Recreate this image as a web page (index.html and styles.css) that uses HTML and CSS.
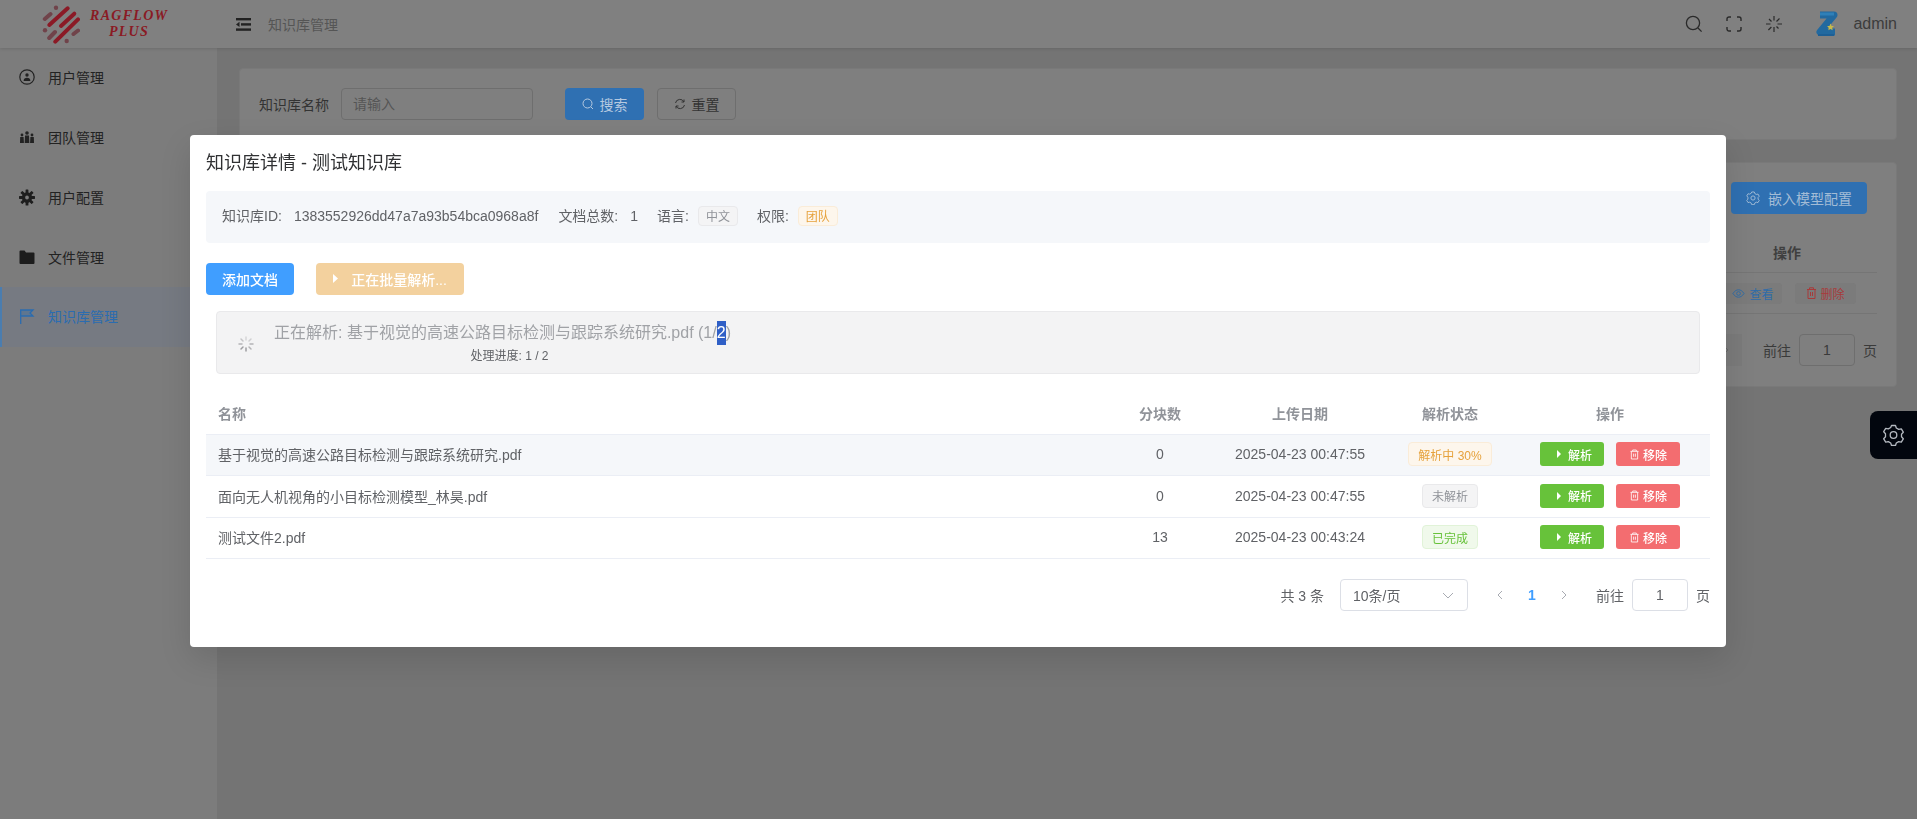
FILE: index.html
```html
<!DOCTYPE html>
<html lang="zh-CN">
<head>
    <meta charset="UTF-8">
    <title>知识库管理</title>
    <link rel="stylesheet" href="styles.css">
</head>
<body>
    <div class="app">
        <header class="topbar">
            <div class="brand">
                <svg class="brand-mark" width="38" height="39" viewBox="0 0 38 39" fill="none" stroke-linecap="round">
                    <g stroke="#8b1a26" stroke-width="4">
                        <path d="M7.300 20L25.700 3.300"/>
                        <path d="M19 21L32.300 8.700"/>
                        <path d="M13.300 36.700L36 14.300"/>
                    </g>
                    <path d="M2.800 14L8.500 9M7.200 33L13 27M31.500 29L36 25.500" stroke="#70434a" stroke-width="4"/>
                    <circle cx="14" cy="2.700" r="2.200" fill="#70434a"/>
                    <circle cx="3" cy="25.300" r="2.200" fill="#70434a"/>
                    <circle cx="24.700" cy="36" r="2.200" fill="#70434a"/>
                </svg>
                <div class="brand-name">RAGFLOW<br>PLUS</div>
            </div>
            <div class="topbar-left">
                <svg class="hamburger" width="15" height="13" viewBox="0 0 15 13" fill="#222">
                    <rect width="15" height="2.400"/>
                    <rect x="5" y="5.200" width="10" height="2.400"/>
                    <rect y="10.400" width="15" height="2.400"/>
                    <path d="M0 6.400L3.500 3.800V9z"/>
                </svg>
                <span class="crumb">知识库管理</span>
            </div>
            <div class="topbar-right">
                <svg class="top-icon" width="18" height="18" viewBox="0 0 18 18" fill="none" stroke="#2a2a2a" stroke-width="1.300">
                    <circle cx="8" cy="8" r="6.600"/>
                    <path d="M13 13l3.600 3.600"/>
                </svg>
                <svg class="top-icon" width="16" height="16" viewBox="0 0 16 16" fill="none" stroke="#2a2a2a" stroke-width="1.400">
                    <path d="M1 5V3a2 2 0 0 1 2-2h2M11 1h2a2 2 0 0 1 2 2v2M15 11v2a2 2 0 0 1-2 2h-2M5 15H3a2 2 0 0 1-2-2v-2"/>
                </svg>
                <svg class="top-icon" width="18" height="18" viewBox="0 0 18 18" fill="none" stroke="#2a2a2a" stroke-width="1.200">
                    <path d="M9 1v4.500M9 12v5M1 9h4.500M12.500 9H17M3.400 15l3-3M11.500 6.500l3-3M4 4l2.500 2.500M11.500 11.500l2 2"/>
                </svg>
                <svg class="avatar" width="24" height="28" viewBox="0 0 24 28" fill="none" stroke-linejoin="round">
                    <path d="M5 5H19L5 22H20" stroke="#22699f" stroke-width="7"/>
                    <path d="M5 4H19" stroke="#2f80b8" stroke-width="3"/>
                    <path d="M3 25H19" stroke="#1d5f95" stroke-width="2"/>
                    <path d="M15.500 13.500l1 2.400 2.500.2-1.900 1.600.6 2.500-2.200-1.300-2.200 1.300.6-2.500-1.900-1.600 2.500-.2z" fill="#c7bb4a"/>
                </svg>
                <span class="username">admin</span>
            </div>
        </header>

        <div class="layout">
            <aside class="sidebar">
                <a class="menu-item">
                    <svg width="16" height="16" viewBox="0 0 16 16" fill="none" stroke="#222" stroke-width="1.200">
                        <circle cx="8" cy="8" r="7.200"/>
                        <circle cx="8" cy="6" r="1.700" fill="#222" stroke="none"/>
                        <path d="M4.600 12h6.800c0-2.200-1.500-3.200-3.400-3.200s-3.400 1-3.400 3.200z" fill="#222" stroke="none"/>
                    </svg>
                    用户管理
                </a>
                <a class="menu-item">
                    <svg width="16" height="16" viewBox="0 0 16 16" fill="#222">
                        <circle cx="8" cy="4" r="1.800"/>
                        <circle cx="3" cy="6" r="1.400"/>
                        <circle cx="13" cy="6" r="1.400"/>
                        <path d="M6 6.500h4l.3 7.500H5.700z"/>
                        <path d="M1.200 8h3.400l.3 6H1z"/>
                        <path d="M11.400 8h3.400l.2 6h-3.900z"/>
                    </svg>
                    团队管理
                </a>
                <a class="menu-item">
                    <svg width="17" height="17" viewBox="0 0 17 17" fill="#1e1e1e">
                        <path fill-rule="evenodd" d="M8.500 3a5.500 5.500 0 1 0 0 11 5.500 5.500 0 0 0 0-11zm0 3.500a2 2 0 1 1 0 4 2 2 0 0 1 0-4z"/>
                        <g>
                            <rect x="7" y="0" width="3" height="4" rx=".6"/>
                            <rect x="7" y="13" width="3" height="4" rx=".6"/>
                            <rect x="0" y="7" width="4" height="3" rx=".6"/>
                            <rect x="13" y="7" width="4" height="3" rx=".6"/>
                        </g>
                        <g transform="rotate(45 8.500 8.500)">
                            <rect x="7" y="0" width="3" height="4" rx=".6"/>
                            <rect x="7" y="13" width="3" height="4" rx=".6"/>
                            <rect x="0" y="7" width="4" height="3" rx=".6"/>
                            <rect x="13" y="7" width="4" height="3" rx=".6"/>
                        </g>
                    </svg>
                    用户配置
                </a>
                <a class="menu-item">
                    <svg width="15" height="14" viewBox="0 0 15 14" fill="#1c1c1c">
                        <path d="M0 1.500A1 1 0 0 1 1 .5h4l1.500 2H14a1 1 0 0 1 1 1V13a1 1 0 0 1-1 1H1a1 1 0 0 1-1-1z"/>
                    </svg>
                    文件管理
                </a>
                <a class="menu-item menu-item-active">
                    <svg width="14" height="15" viewBox="0 0 14 15" fill="none" stroke="#2b6cb0" stroke-width="1.300">
                        <path d="M.7 15V1h12.300L10 4l3 3H.7"/>
                        <path d="M.7 1h12L10 4l3 3H.7z" fill="#2b6cb0" fill-opacity=".3" stroke="none"/>
                    </svg>
                    知识库管理
                </a>
            </aside>

            <main class="main">
                <section class="card search-card">
                    <label class="search-label">知识库名称</label>
                    <div class="search-input">请输入</div>
                    <div class="btn btn-search">
                        <svg width="12" height="12" viewBox="0 0 12 12" fill="none" stroke="#b5c9e0" stroke-width="1">
                            <circle cx="5.500" cy="5.500" r="4.500"/>
                            <path d="M9 9l2 2"/>
                        </svg>
                        搜索
                    </div>
                    <div class="btn btn-reset">
                        <svg width="12" height="12" viewBox="0 0 12 12" fill="none" stroke="#333" stroke-width="1">
                            <path d="M1.500 5A4.500 4.500 0 0 1 10 4M10.500 7A4.500 4.500 0 0 1 2 8M10 1.500V4H7.500M2 10.500V8h2.500"/>
                        </svg>
                        重置
                    </div>
                </section>

                <section class="card list-card">
                    <div class="list-toolbar">
                        <div class="btn btn-embed">
                            <svg width="14" height="14" viewBox="0 0 21 22" fill="none" stroke="#a3bcd6" stroke-width="1.500" stroke-linejoin="round">
                                <path d="M8.500 1.500h4l.8 2.500 2.400 1.400 2.600-.6 2 3.400-1.800 2v2.600l1.800 2-2 3.400-2.600-.6-2.400 1.400-.8 2.500h-4l-.8-2.500-2.400-1.400-2.600.6-2-3.400 1.800-2V9.700l-1.800-2 2-3.400 2.600.6 2.400-1.400z"/>
                                <circle cx="10.500" cy="11" r="3.300"/>
                            </svg>
                            嵌入模型配置
                        </div>
                    </div>
                    <div class="list-head"><span class="list-op">操作</span></div>
                    <div class="list-row">
                        <div class="list-op">
                            <span class="mini-btn mini-view">
                                <svg width="13" height="13" viewBox="0 0 14 14" fill="none" stroke="#2f6ca8" stroke-width="1">
                                    <path d="M1 7c2-3 4-4 6-4s4 1 6 4c-2 3-4 4-6 4s-4-1-6-4z"/>
                                    <circle cx="7" cy="7" r="2"/>
                                </svg>
                                查看
                            </span>
                            <span class="mini-btn mini-delete">
                                <svg width="11" height="12" viewBox="0 0 11 12" fill="none" stroke="#a83a3a" stroke-width="1">
                                    <path d="M1 2.500h9M3.500 2.500V.8h4v1.700M2 2.500v9h7v-9M4.500 5v4M6.500 5v4"/>
                                </svg>
                                删除
                            </span>
                        </div>
                    </div>
                    <div class="list-pager">
                        <span class="pager-next">
                            <svg width="7" height="10" viewBox="0 0 7 10" fill="none" stroke="#666" stroke-width="1">
                                <path d="M1 1l4 4-4 4"/>
                            </svg>
                        </span>
                        <span>前往</span>
                        <span class="pager-jump">1</span>
                        <span>页</span>
                    </div>
                </section>
            </main>
        </div>
    </div>

    <button class="settings-tab" type="button" aria-label="设置">
        <svg width="21" height="22" viewBox="0 0 21 22" fill="none" stroke="#b4b9c0" stroke-width="1.300" stroke-linejoin="round">
            <path d="M8.500 1.500h4l.8 2.500 2.400 1.400 2.600-.6 2 3.400-1.800 2v2.600l1.800 2-2 3.400-2.600-.6-2.400 1.400-.8 2.500h-4l-.8-2.500-2.400-1.400-2.600.6-2-3.400 1.800-2V9.700l-1.800-2 2-3.400 2.600.6 2.400-1.400z"/>
            <circle cx="10.500" cy="11" r="3.300"/>
        </svg>
    </button>

    <div class="dialog-wrap">
        <div class="dialog">
            <h2 class="dialog-title">知识库详情 - 测试知识库</h2>

            <div class="info-box">
                <div class="info-item"><span>知识库ID:</span><span>1383552926dd47a7a93b54bca0968a8f</span></div>
                <div class="info-item"><span>文档总数:</span><span>1</span></div>
                <div class="info-item info-item-tag"><span>语言:</span><span class="tag tag-grey tag-small">中文</span></div>
                <div class="info-item info-item-tag"><span>权限:</span><span class="tag tag-orange tag-small">团队</span></div>
            </div>

            <div class="dialog-actions">
                <div class="btn btn-add">添加文档</div>
                <div class="btn btn-batch">
                    <svg width="5" height="9" viewBox="0 0 5 9" fill="#fff"><path d="M0 0l5 4.500L0 9z"/></svg>
                    正在批量解析...
                </div>
            </div>

            <div class="progress-box">
                <svg class="spinner" width="16" height="16" viewBox="0 0 16 16" fill="none" stroke="#b4b4b6" stroke-width="1.500" stroke-linecap="round">
                    <path d="M8 1v3" stroke="#d6d6d8"/>
                    <path d="M13 3l-2 2" stroke="#cfcfd1"/>
                    <path d="M15 8h-3"/>
                    <path d="M13 13l-2-2"/>
                    <path d="M8 15v-3" stroke="#9d9da0"/>
                    <path d="M3 13l2-2" stroke="#9d9da0"/>
                    <path d="M1 8h3"/>
                    <path d="M3 3l2 2" stroke="#c4c4c6"/>
                </svg>
                <div class="progress-text">
                    <div class="progress-title">正在解析: 基于视觉的高速公路目标检测与跟踪系统研究.pdf (1/<span class="selected">2</span>)</div>
                    <div class="progress-sub">处理进度: 1 / 2</div>
                </div>
            </div>

            <table class="doc-table">
                <colgroup>
                    <col>
                    <col class="col-chunks">
                    <col class="col-date">
                    <col class="col-status">
                    <col class="col-ops">
                </colgroup>
                <thead>
                    <tr>
                        <th class="cell-name">名称</th>
                        <th>分块数</th>
                        <th>上传日期</th>
                        <th>解析状态</th>
                        <th>操作</th>
                    </tr>
                </thead>
                <tbody>
                    <tr class="row-hover">
                        <td class="cell-name">基于视觉的高速公路目标检测与跟踪系统研究.pdf</td>
                        <td>0</td>
                        <td>2025-04-23 00:47:55</td>
                        <td><span class="tag tag-orange">解析中 30%</span></td>
                        <td>
                            <div class="row-ops">
                                <span class="row-btn row-parse">
                                    <svg width="4" height="8" viewBox="0 0 4 8" fill="#fff"><path d="M0 0l4 4-4 4z"/></svg>
                                    解析
                                </span>
                                <span class="row-btn row-remove">
                                    <svg width="9" height="11" viewBox="0 0 10 11" fill="none" stroke="#fff" stroke-width=".9"><path d="M.5 2h9M3 2V.5h4V2M1.500 2v8.500h7V2M4 4.500v3.500M6 4.500v3.500"/></svg>
                                    移除
                                </span>
                            </div>
                        </td>
                    </tr>
                    <tr>
                        <td class="cell-name">面向无人机视角的小目标检测模型_林昊.pdf</td>
                        <td>0</td>
                        <td>2025-04-23 00:47:55</td>
                        <td><span class="tag tag-grey">未解析</span></td>
                        <td>
                            <div class="row-ops">
                                <span class="row-btn row-parse">
                                    <svg width="4" height="8" viewBox="0 0 4 8" fill="#fff"><path d="M0 0l4 4-4 4z"/></svg>
                                    解析
                                </span>
                                <span class="row-btn row-remove">
                                    <svg width="9" height="11" viewBox="0 0 10 11" fill="none" stroke="#fff" stroke-width=".9"><path d="M.5 2h9M3 2V.5h4V2M1.500 2v8.500h7V2M4 4.500v3.500M6 4.500v3.500"/></svg>
                                    移除
                                </span>
                            </div>
                        </td>
                    </tr>
                    <tr>
                        <td class="cell-name">测试文件2.pdf</td>
                        <td>13</td>
                        <td>2025-04-23 00:43:24</td>
                        <td><span class="tag tag-green">已完成</span></td>
                        <td>
                            <div class="row-ops">
                                <span class="row-btn row-parse">
                                    <svg width="4" height="8" viewBox="0 0 4 8" fill="#fff"><path d="M0 0l4 4-4 4z"/></svg>
                                    解析
                                </span>
                                <span class="row-btn row-remove">
                                    <svg width="9" height="11" viewBox="0 0 10 11" fill="none" stroke="#fff" stroke-width=".9"><path d="M.5 2h9M3 2V.5h4V2M1.500 2v8.500h7V2M4 4.500v3.500M6 4.500v3.500"/></svg>
                                    移除
                                </span>
                            </div>
                        </td>
                    </tr>
                </tbody>
            </table>

            <div class="pagination">
                <span class="page-total">共 3 条</span>
                <div class="page-size">
                    <span>10条/页</span>
                    <svg width="12" height="7" viewBox="0 0 12 7" fill="none" stroke="#a8abb2" stroke-width="1"><path d="M1 1l5 5 5-5"/></svg>
                </div>
                <div class="page-nums">
                    <svg width="7" height="10" viewBox="0 0 7 10" fill="none" stroke="#a8abb2" stroke-width="1"><path d="M6 1L2 5l4 4"/></svg>
                    <span class="page-current">1</span>
                    <svg width="7" height="10" viewBox="0 0 7 10" fill="none" stroke="#a8abb2" stroke-width="1"><path d="M1 1l4 4-4 4"/></svg>
                </div>
                <span class="page-goto">前往</span>
                <span class="page-input">1</span>
                <span>页</span>
            </div>
        </div>
    </div>
</body>
</html>
```

FILE: styles.css
```css
* {
    margin: 0;
    padding: 0;
    box-sizing: border-box;
}

body {
    width: 100vw;
    height: 100vh;
    overflow: hidden;
    background: #747474;
    color: #333;
    font-family: "Liberation Sans", "Noto Sans CJK SC", sans-serif;
    font-size: 14px;
}

.app {
    height: 100vh;
    display: flex;
    flex-direction: column;
}

/* top bar */
.topbar {
    height: 48px;
    flex-shrink: 0;
    display: flex;
    align-items: center;
    background: #808080;
    box-shadow: 0 1px 3px rgba(0, 0, 0, .12);
    position: relative;
}

.brand {
    width: 236px;
    padding-left: 42px;
    display: flex;
    align-items: center;
    gap: 10px;
}

.brand-name {
    width: 78px;
    font-family: "Liberation Serif", serif;
    font-size: 14px;
    font-weight: bold;
    font-style: italic;
    line-height: 16px;
    letter-spacing: 1.300px;
    text-align: center;
    color: #8a1a24;
    padding-bottom: 1px;
}

.topbar-left {
    display: flex;
    align-items: center;
    gap: 17px;
    flex: 1;
}

.crumb {
    color: #555;
}

.topbar-right {
    display: flex;
    align-items: center;
    padding-right: 20px;
}

.top-icon {
    margin-right: 23px;
}

.avatar {
    margin-left: 9px;
    margin-right: 14px;
}

.username {
    font-size: 16px;
    color: #3c3c3c;
}

/* left menu */
.layout {
    flex: 1;
    display: flex;
}

.sidebar {
    width: 217px;
    flex-shrink: 0;
    background: #7c7c7c;
}

.menu-item {
    height: 60px;
    padding-left: 19px;
    padding-bottom: 2px;
    display: flex;
    align-items: center;
    gap: 13px;
    color: #222;
}

.menu-item svg {
    width: 16px;
    flex-shrink: 0;
}

.menu-item-active {
    margin-top: -1px;
    background: #767a82;
    border-left: 2px solid #4a7db0;
    padding-left: 17px;
    color: #2b6cb0;
}

/* page behind the dialog */
.main {
    flex: 1;
    padding: 20px 20px 20px 22px;
    display: flex;
    flex-direction: column;
    gap: 22px;
}

.card {
    background: #7f7f7f;
    border: 1px solid #797979;
    border-radius: 4px;
}

.search-card {
    height: 72px;
    padding: 0 19px;
    display: flex;
    align-items: center;
    color: #333;
}

.search-label {
    width: 82px;
}

.search-input {
    width: 192px;
    height: 32px;
    line-height: 30px;
    padding-left: 11px;
    border: 1px solid #6e6e6e;
    border-radius: 4px;
    color: #555;
    margin-right: 32px;
}

.btn {
    height: 32px;
    padding-bottom: 1px;
    border-radius: 4px;
    display: inline-flex;
    align-items: center;
    justify-content: center;
    gap: 6px;
}

.btn-search {
    width: 79px;
    background: #2f70b2;
    color: #b5c9e0;
    margin-right: 13px;
}

.btn-reset {
    width: 79px;
    border: 1px solid #6e6e6e;
    color: #333;
}

.list-card {
    height: 225px;
    padding: 19px 19px;
}

.list-toolbar {
    display: flex;
    justify-content: flex-end;
    padding-right: 10px;
}

.btn-embed {
    width: 136px;
    background: #2f70b2;
    color: #a3bcd6;
    gap: 8px;
}

.list-head,
.list-row {
    display: flex;
    justify-content: flex-end;
    align-items: center;
    border-bottom: 1px solid #757575;
}

.list-head {
    height: 59px;
    padding-top: 18px;
    font-weight: bold;
    color: #3f3f3f;
}

.list-row {
    height: 41px;
}

.list-op {
    width: 180px;
    padding-left: 6px;
    display: flex;
    justify-content: center;
    gap: 13px;
}

.list-head .list-op {
    padding-left: 0;
}

.mini-btn {
    height: 21px;
    padding: 0 8px;
    display: inline-flex;
    align-items: center;
    gap: 4px;
    font-size: 12px;
    background: #7b7b7b;
    border-radius: 3px;
}

.mini-view {
    color: #2f6ca8;
}

.mini-delete {
    padding: 0 11px;
    color: #a83a3a;
}

.list-pager {
    margin-top: 20px;
    display: flex;
    justify-content: flex-end;
    align-items: center;
    height: 32px;
    color: #3a3a3a;
}

.pager-next {
    width: 32px;
    height: 32px;
    margin-right: 21px;
    display: flex;
    align-items: center;
    justify-content: center;
    background: #7b7b7b;
}

.pager-jump {
    width: 56px;
    height: 32px;
    margin: 0 8px;
    line-height: 30px;
    text-align: center;
    border: 1px solid #6e6e6e;
    border-radius: 4px;
}

.settings-tab {
    position: fixed;
    top: 411px;
    right: 0;
    width: 47px;
    height: 48px;
    border: none;
    border-radius: 8px 0 0 8px;
    background: #02060e;
    display: flex;
    align-items: center;
    justify-content: center;
}

/* dialog */
.dialog-wrap {
    position: fixed;
    inset: 0;
    padding: 135px 1px 0 0;
    display: flex;
    justify-content: center;
    align-items: flex-start;
}

.dialog {
    width: 1536px;
    height: 512px;
    padding: 16px;
    background: #fff;
    border-radius: 4px;
    box-shadow: 0 12px 32px rgba(0, 0, 0, .12);
}

.dialog-title {
    font-size: 18px;
    font-weight: normal;
    line-height: 24px;
    color: #303133;
}

.info-box {
    margin-top: 16px;
    height: 52px;
    padding: 14px 16px 0;
    display: flex;
    align-items: baseline;
    gap: 20px;
    background: #f5f7fa;
    border-radius: 4px;
    color: #606266;
}

.info-item {
    display: flex;
    align-items: baseline;
    gap: 12px;
}

.info-item-tag {
    margin-left: -1px;
    gap: 9px;
}

.tag {
    display: inline-flex;
    align-items: center;
    justify-content: center;
    height: 24px;
    padding: 0 9px;
    font-size: 12px;
    border: 1px solid;
    border-radius: 4px;
}

.tag-small {
    width: 40px;
    height: 20px;
    padding: 0;
}

.tag-grey {
    background: #f4f4f5;
    border-color: #e9e9eb;
    color: #909399;
}

.tag-orange {
    background: #fdf6ec;
    border-color: #faecd8;
    color: #e6a23c;
}

.tag-green {
    background: #f0f9eb;
    border-color: #e1f3d8;
    color: #67c23a;
}

.dialog-actions {
    margin-top: 20px;
    display: flex;
    gap: 22px;
}

.btn-add {
    width: 88px;
    background: #409eff;
    color: #fff;
    font-weight: 500;
}

.btn-batch {
    width: 148px;
    background: #f3d19e;
    color: #fff;
    gap: 13px;
    font-weight: 500;
}

.progress-box {
    margin: 16px 10px 0;
    height: 63px;
    padding-left: 21px;
    display: flex;
    align-items: center;
    gap: 20px;
    background: #f3f3f4;
    border: 1px solid #e9e9eb;
    border-radius: 4px;
}

.spinner {
    margin-top: 2px;
}

.progress-title {
    font-size: 16px;
    line-height: 24px;
    color: #a0a2a6;
}

.selected {
    display: inline-block;
    width: 9px;
    line-height: 24px;
    background: #2f5fc6;
    color: #fff;
}

.progress-sub {
    margin-top: 2px;
    font-size: 12px;
    line-height: 18px;
    text-align: center;
    color: #606266;
    padding-left: 14px;
}

.doc-table {
    width: 100%;
    margin-top: 20px;
    table-layout: fixed;
    border-collapse: collapse;
    color: #606266;
}

.col-chunks {
    width: 100px;
}

.col-date {
    width: 180px;
}

.col-status {
    width: 120px;
}

.col-ops {
    width: 200px;
}

.doc-table th,
.doc-table td {
    padding-bottom: 1px;
    text-align: center;
    border-bottom: 1px solid #ebeef5;
}

.doc-table th {
    height: 40px;
    font-weight: bold;
    color: #909399;
}

.doc-table td {
    height: 41.500px;
}

.doc-table .cell-name {
    text-align: left;
    padding-left: 12px;
}

.row-hover td {
    background: #f5f7fa;
}

.row-ops {
    display: flex;
    justify-content: center;
    gap: 12px;
}

.row-btn {
    width: 64px;
    height: 24px;
    display: inline-flex;
    align-items: center;
    font-size: 12px;
    font-weight: 500;
    color: #fff;
    border-radius: 3px;
}

.row-parse {
    padding-left: 17px;
    gap: 7px;
    background: #67c23a;
}

.row-remove {
    padding-left: 14px;
    gap: 4px;
    background: #f36d70;
}

.pagination {
    margin-top: 20px;
    height: 32px;
    display: flex;
    justify-content: flex-end;
    align-items: center;
    color: #606266;
}

.page-total {
    margin-right: 16px;
}

.page-size {
    width: 128px;
    height: 32px;
    padding: 0 13px 0 12px;
    display: flex;
    align-items: center;
    justify-content: space-between;
    border: 1px solid #dcdfe6;
    border-radius: 4px;
    margin-right: 16px;
}

.page-nums {
    width: 96px;
    display: flex;
    align-items: center;
    justify-content: space-around;
    margin-right: 16px;
}

.page-current {
    font-weight: bold;
    color: #409eff;
}

.page-input {
    width: 56px;
    height: 32px;
    margin: 0 8px;
    line-height: 30px;
    text-align: center;
    border: 1px solid #dcdfe6;
    border-radius: 4px;
}
```
